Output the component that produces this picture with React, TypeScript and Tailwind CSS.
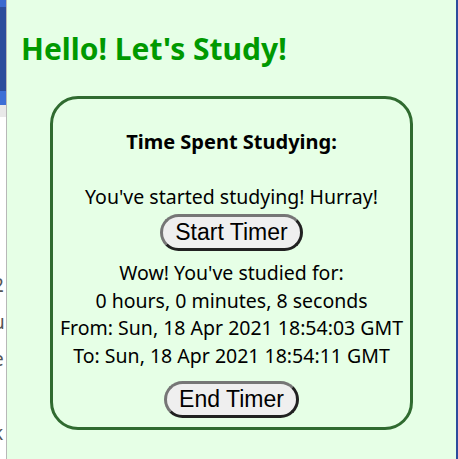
import { useState } from "react"

const SANS = "font-['Noto_Sans','Open_Sans',sans-serif]"
const BTN =
  "rounded-full border-[3px] [border-style:outset] border-[#767676] bg-[#efefef] px-[12px] font-['Liberation_Sans',Arial,sans-serif] text-[23px] leading-[31px] text-black"

function BehindPage() {
  // sliver of the page underneath the popup
  return (
    <div className="relative w-[6px] shrink-0 overflow-hidden bg-white">
      <div className="h-[7px] bg-[#3b69cf]" />
      <div className="h-[84px] bg-[#2c4c9c]" />
      <div className="h-[14px] bg-[#3d6fd6]" />
      <div className="h-[12px] bg-[#e9e9e9]" />
      <div className="ml-[-7px] font-['Noto_Sans',sans-serif] text-[19px] leading-[37px] text-[#555]">
        <div className="mt-[150px]">2</div>
        <div>u</div>
        <div>e</div>
        <div className="mt-[37px]">k</div>
      </div>
    </div>
  )
}

export default function App() {
  const [seconds] = useState(8)

  return (
    <div className="flex h-[459px] w-[458px] overflow-hidden">
      <BehindPage />
      <div className="w-px shrink-0 bg-[#b8b8b8]" />
      <div className={`flex flex-1 flex-col bg-[#e6ffe6] ${SANS}`}>
        <h1 className="mt-[29px] ml-[14px] text-[30px] font-bold leading-[40px] text-[#009900]">
          Hello! Let's Study!
        </h1>

        <div className="mx-auto mt-[27px] flex w-[363px] flex-col items-center rounded-[28px] border-[3px] border-[#306b30] pt-[29px] pb-[9px] text-center text-[19.5px] leading-[27.5px] text-black">
          <p className="text-[20px] font-bold">Time Spent Studying:</p>
          <p className="mt-[27px]">You've started studying! Hurray!</p>
          <button className={`${BTN} mt-[4px]`}>Start Timer</button>
          <p className="mt-[8px]">Wow! You've studied for:</p>
          <p>0 hours, 0 minutes, {seconds} seconds</p>
          <p>From: Sun, 18 Apr 2021 18:54:03 GMT</p>
          <p>To: Sun, 18 Apr 2021 18:54:11 GMT</p>
          <button className={`${BTN} mt-[12px]`}>End Timer</button>
        </div>
      </div>
      <div className="w-[2px] shrink-0 bg-[#2c4c9c]" />
    </div>
  )
}
